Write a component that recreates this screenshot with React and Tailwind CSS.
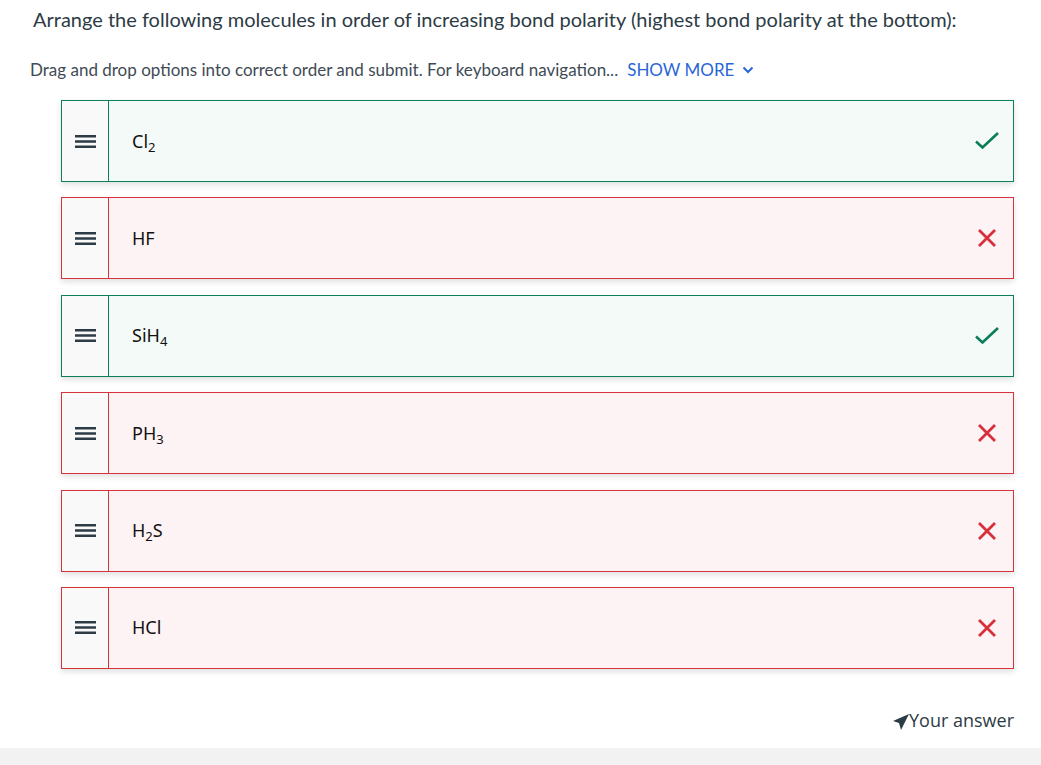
import React from "react";

const items = [
  { label: ["Cl", "2"], ok: true },
  { label: ["HF"], ok: false },
  { label: ["SiH", "4"], ok: true },
  { label: ["PH", "3"], ok: false },
  { label: ["H", "2", "S"], ok: false },
  { label: ["HCl"], ok: false },
];

const Handle = () => (
  <svg width="21" height="13" viewBox="0 0 21 13">
    <rect x="0" y="0" width="21" height="2.5" fill="#2d3b45" />
    <rect x="0" y="5.25" width="21" height="2.5" fill="#2d3b45" />
    <rect x="0" y="10.5" width="21" height="2.5" fill="#2d3b45" />
  </svg>
);

const Check = () => (
  <svg width="26" height="20" viewBox="0 0 26 20">
    <path d="M2 10.5 L8.5 16.5 L24 2" fill="none" stroke="#0b7d5b" strokeWidth="2.6" />
  </svg>
);

const Cross = () => (
  <svg width="20" height="20" viewBox="0 0 20 20">
    <path d="M2 2 L18 18 M18 2 L2 18" fill="none" stroke="#d7303b" strokeWidth="2.8" />
  </svg>
);

// parts alternate: text, subscript, text ...
const Formula = ({ parts }) => (
  <span>
    {parts.map((p, i) =>
      i % 2 === 1 ? (
        <span key={i} className="text-[13px] relative top-[4px]">{p}</span>
      ) : (
        <span key={i}>{p}</span>
      )
    )}
  </span>
);

const Row = ({ item }) => {
  const border = item.ok ? "border-[#0e7f5e]" : "border-[#d7333d]";
  const bg = item.ok ? "bg-[#f4faf8]" : "bg-[#fdf3f4]";
  return (
    <div className={`flex h-[82px] border ${border} shadow-[0_3px_6px_rgba(0,0,0,0.12)]`}>
      <div className={`w-[47px] flex items-center justify-center bg-[#f9f9fa] border-r ${border}`}>
        <Handle />
      </div>
      <div className={`flex-1 flex items-center pl-[23px] pr-[13px] ${bg}`}>
        <div className="flex-1 text-[18px] text-[#111]" style={{ fontFamily: '"Noto Sans", sans-serif' }}>
          <Formula parts={item.label} />
        </div>
        <div className="w-[26px] flex justify-center">
          {item.ok ? <Check /> : <Cross />}
        </div>
      </div>
    </div>
  );
};

export default function App() {
  return (
    <div className="w-[1041px] h-[765px] bg-white flex flex-col overflow-hidden" style={{ fontFamily: 'Lato, "Noto Sans", sans-serif' }}>
      <div className="flex-1 flex flex-col">
        <h1 className="pl-[33px] pt-[5px] text-[20px] leading-[28px] text-[#2d3b45] font-normal">
          Arrange the following molecules in order of increasing bond polarity (highest bond polarity at the bottom):
        </h1>
        <p className="pl-[30px] mt-[26px] text-[17px] leading-[22px] text-[#3f4b55] flex items-center">
          Drag and drop options into correct order and submit. For keyboard navigation...
          <span className="ml-[9px] text-[#2a66d8] flex items-center">
            SHOW MORE
            <svg className="ml-[8px]" width="12" height="8" viewBox="0 0 12 8">
              <path d="M1.5 1.5 L6 6 L10.5 1.5" fill="none" stroke="#2a66d8" strokeWidth="2" />
            </svg>
          </span>
        </p>
        <div className="ml-[61px] w-[953px] mt-[19px] flex flex-col gap-[15.4px]">
          {items.map((it, i) => (
            <Row key={i} item={it} />
          ))}
        </div>
        <div className="mt-[38px] w-[1014px] flex justify-end items-center text-[18px] text-[#2d3b45]" style={{ fontFamily: '"Open Sans", sans-serif' }}>
          <svg width="16" height="16" viewBox="0 0 16 16" className="mt-[4px]">
            <path d="M16 0 L0 7 L6 9 Z M16 0 L6 9 L8 16 Z" fill="#2d3b45" />
          </svg>
          <span>Your answer</span>
        </div>
      </div>
      <div className="h-[17px] bg-[#f2f2f2]" />
    </div>
  );
}
